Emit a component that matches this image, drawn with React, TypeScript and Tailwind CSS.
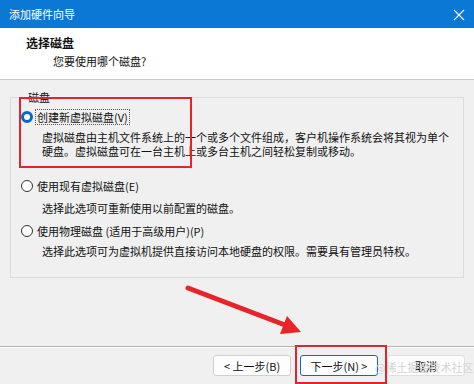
import React from "react"

function Radio({ checked }: { checked?: boolean }) {
    if (checked) {
        return <span className="block w-[12px] h-[12px] rounded-full border-[3px] border-[#0a67c6] bg-white shrink-0" />
    }
    return <span className="block w-[12px] h-[12px] rounded-full border border-[#333333] bg-white shrink-0" />
}

export default function App() {
    return (
        <div className="relative w-[474px] h-[384px] overflow-hidden bg-[#f0f0f0] text-[#111111] text-[11px] font-['Microsoft_YaHei','Noto_Sans_CJK_SC',sans-serif]">
            {/* title bar */}
            <div className="h-[28px] bg-[#0b78d5] flex items-center justify-between pl-[9px] pr-[9px]">
                <span className="text-white text-[11px] leading-[14px]">添加硬件向导</span>
                <svg width="12" height="12" viewBox="0 0 12 12" className="mb-[-1px]">
                    <path d="M1 1 L11 11 M11 1 L1 11" stroke="#ffffff" strokeWidth="1.1" />
                </svg>
            </div>

            {/* header */}
            <div className="h-[52px] bg-white border-b border-[#c8c8c8] pt-[8px]">
                <div className="pl-[26px] font-bold text-[12px] leading-[14px]">选择磁盘</div>
                <div className="pl-[53px] mt-[4px] leading-[14px]">您要使用哪个磁盘?</div>
            </div>

            {/* body */}
            <div className="h-[266px] px-[10px] pt-[10px]">
                <fieldset className="border border-[#dcdcdc] h-[188px] pl-[10px]">
                    <legend className="ml-[6px] px-[1px] leading-[14px]">磁盘</legend>
                    <div className="flex items-center h-[18px] mt-[4px] gap-[3px]">
                        <Radio checked />
                        <span className="leading-[14px] outline-1 outline-dotted outline-[#555555] px-[1px]">创建新虚拟磁盘(V)</span>
                    </div>
                    <div className="ml-[21px] mt-[4px] leading-[14px]">
                        <div className="whitespace-nowrap">虚拟磁盘由主机文件系统上的一个或多个文件组成，客户机操作系统会将其视为单个</div>
                        <div className="whitespace-nowrap">硬盘。虚拟磁盘可在一台主机上或多台主机之间轻松复制或移动。</div>
                    </div>

                    <div className="flex items-center h-[18px] mt-[19px] gap-[4px]">
                        <Radio />
                        <span className="leading-[14px]">使用现有虚拟磁盘(E)</span>
                    </div>
                    <div className="ml-[21px] mt-[6px] leading-[14px] whitespace-nowrap">选择此选项可重新使用以前配置的磁盘。</div>

                    <div className="flex items-center h-[18px] mt-[7px] gap-[4px]">
                        <Radio />
                        <span className="leading-[14px]">使用物理磁盘 (适用于高级用户)(P)</span>
                    </div>
                    <div className="ml-[21px] mt-[4px] leading-[14px] whitespace-nowrap">选择此选项可为虚拟机提供直接访问本地硬盘的权限。需要具有管理员特权。</div>
                </fieldset>
            </div>

            {/* separator */}
            <div className="border-t border-[#b4b4b4]" />
            <div className="border-t border-white" />

            {/* footer */}
            <div className="flex justify-end gap-[9px] pr-[9px] pt-[7px]">
                <button className="w-[78px] h-[21px] bg-[#fdfdfd] border border-[#d0d0d0] rounded-[3px] leading-[14px] text-[11px]">&lt; 上一步(B)</button>
                <button className="w-[78px] h-[21px] bg-[#fdfdfd] border border-[#1565b8] rounded-[3px] leading-[14px] text-[11px]">下一步(N) &gt;</button>
                <button className="w-[78px] h-[21px] bg-[#fdfdfd] border border-[#e0e0e0] rounded-[3px] leading-[14px] text-[11px]">取消</button>
            </div>

            {/* watermark */}
            <span className="absolute left-[375px] top-[360px] leading-[14px] text-[11px] text-[#d4d4d4] whitespace-nowrap pointer-events-none">@稀土掘金技术社区</span>

            {/* annotations */}
            <div className="absolute left-[19px] top-[97px] w-[173px] h-[71px] border-2 border-[#e0262a]" />
            <div className="absolute left-[295px] top-[345px] w-[92px] h-[39px] border-2 border-[#e0262a]" />
            <svg className="absolute left-0 top-0" width="474" height="384" viewBox="0 0 474 384">
                <line x1="188" y1="288" x2="285" y2="325" stroke="#e8232a" strokeWidth="5" strokeLinecap="round" />
                <polygon points="301,332 280,334 287,316" fill="#e8232a" />
            </svg>
        </div>
    )
}
